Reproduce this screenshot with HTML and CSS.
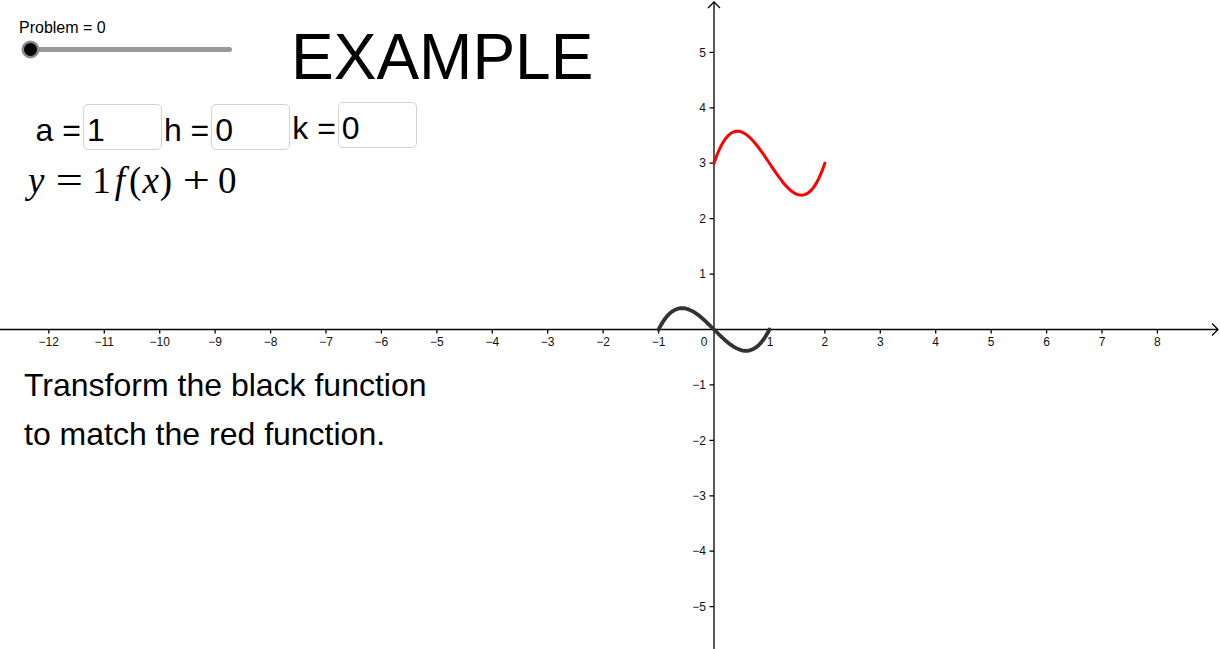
FILE: index.html
```html
<!DOCTYPE html>
<html lang="en">
<head>
<meta charset="utf-8">
<title>Transform the function</title>
<link rel="stylesheet" href="styles.css">
</head>
<body>
<div class="app">
  <svg class="graph" width="1220" height="649" viewBox="0 0 1220 649" xmlns="http://www.w3.org/2000/svg">
    <g class="axes" stroke="#000" stroke-width="1.3" fill="none">
      <line x1="0" y1="329.5" x2="1218" y2="329.5"/>
      <polyline points="1212,323.5 1218,329.5 1212,335.5"/>
      <line x1="714" y1="2" x2="714" y2="649"/>
      <polyline points="708,8 714,2 720,8"/>
      <path d="M48.8 329.5v4M104.3 329.5v4M159.7 329.5v4M215.1 329.5v4M270.6 329.5v4M326 329.5v4M381.4 329.5v4M436.9 329.5v4M492.3 329.5v4M547.7 329.5v4M603.1 329.5v4M658.6 329.5v4M769.4 329.5v4M824.9 329.5v4M880.3 329.5v4M935.7 329.5v4M991.2 329.5v4M1046.6 329.5v4M1102 329.5v4M1157.4 329.5v4"/>
      <path d="M714 52.4h-4.5M714 107.8h-4.5M714 163.2h-4.5M714 218.6h-4.5M714 274.1h-4.5M714 384.9h-4.5M714 440.4h-4.5M714 495.8h-4.5M714 551.2h-4.5M714 606.7h-4.5"/>
    </g>
    <g class="xlabels" text-anchor="middle">
      <text x="48.8" y="346">−12</text>
      <text x="104.3" y="346">−11</text>
      <text x="159.7" y="346">−10</text>
      <text x="215.1" y="346">−9</text>
      <text x="270.6" y="346">−8</text>
      <text x="326" y="346">−7</text>
      <text x="381.4" y="346">−6</text>
      <text x="436.9" y="346">−5</text>
      <text x="492.3" y="346">−4</text>
      <text x="547.7" y="346">−3</text>
      <text x="603.1" y="346">−2</text>
      <text x="658.6" y="346">−1</text>
      <text x="704" y="346">0</text>
      <text x="770" y="346">1</text>
      <text x="824.9" y="346">2</text>
      <text x="880.3" y="346">3</text>
      <text x="935.7" y="346">4</text>
      <text x="991.2" y="346">5</text>
      <text x="1046.6" y="346">6</text>
      <text x="1102" y="346">7</text>
      <text x="1157.4" y="346">8</text>
    </g>
    <g class="ylabels" text-anchor="end">
      <text x="706" y="56.5">5</text>
      <text x="706" y="112">4</text>
      <text x="706" y="167.4">3</text>
      <text x="706" y="222.8">2</text>
      <text x="706" y="278.3">1</text>
      <text x="706" y="389.1">−1</text>
      <text x="706" y="444.6">−2</text>
      <text x="706" y="500">−3</text>
      <text x="706" y="555.4">−4</text>
      <text x="706" y="610.9">−5</text>
    </g>
    <g transform="translate(714 329.5) scale(55.43 -55.43)" fill="none" stroke-linecap="round" stroke-linejoin="round">
      <polyline class="curve-black" vector-effect="non-scaling-stroke" points="-1,0 -0.95,0.0926 -0.9,0.171 -0.85,0.2359 -0.8,0.288 -0.75,0.3281 -0.7,0.357 -0.65,0.3754 -0.6,0.384 -0.55,0.3836 -0.5,0.375 -0.45,0.3589 -0.4,0.336 -0.35,0.3071 -0.3,0.273 -0.25,0.2344 -0.2,0.192 -0.15,0.1466 -0.1,0.099 -0.05,0.0499 0,0 0.05,-0.0499 0.1,-0.099 0.15,-0.1466 0.2,-0.192 0.25,-0.2344 0.3,-0.273 0.35,-0.3071 0.4,-0.336 0.45,-0.3589 0.5,-0.375 0.55,-0.3836 0.6,-0.384 0.65,-0.3754 0.7,-0.357 0.75,-0.3281 0.8,-0.288 0.85,-0.2359 0.9,-0.171 0.95,-0.0926 1,0"/>
      <polyline class="curve-red" vector-effect="non-scaling-stroke" points="0,3 0.05,3.1389 0.1,3.2565 0.15,3.3538 0.2,3.432 0.25,3.4922 0.3,3.5355 0.35,3.563 0.4,3.576 0.45,3.5755 0.5,3.5625 0.55,3.5383 0.6,3.504 0.65,3.4607 0.7,3.4095 0.75,3.3516 0.8,3.288 0.85,3.2199 0.9,3.1485 0.95,3.0748 1,3 1.05,2.9252 1.1,2.8515 1.15,2.7801 1.2,2.712 1.25,2.6484 1.3,2.5905 1.35,2.5393 1.4,2.496 1.45,2.4617 1.5,2.4375 1.55,2.4245 1.6,2.424 1.65,2.437 1.7,2.4645 1.75,2.5078 1.8,2.568 1.85,2.6462 1.9,2.7435 1.95,2.8611 2,3"/>
    </g>
  </svg>

  <div class="panel">
    <div class="top-row">
      <div class="slider-block">
        <div class="slider-label">Problem = 0</div>
        <div class="slider-track"><span class="slider-knob"></span></div>
      </div>
      <h1 class="title">EXAMPLE</h1>
    </div>

    <div class="inputs-row">
      <div class="field"><span class="lbl">a =</span><span class="box">1</span></div>
      <div class="field"><span class="lbl">h =</span><span class="box">0</span></div>
      <div class="field field-k"><span class="lbl">k =</span><span class="box">0</span></div>
    </div>

    <div class="formula"><i>y</i><span class="op op-eq">=</span><span class="num">1</span><i class="fn">f</i><span class="paren">(</span><i>x</i><span class="paren">)</span><span class="op op-plus">+</span><span class="num">0</span></div>

    <p class="prompt">Transform the black function<br>to match the red function.</p>
  </div>
</div>
</body>
</html>
```
FILE: styles.css
```css
html, body {
  margin: 0;
  padding: 0;
  background: #fff;
}

body {
  font-family: "Liberation Sans", Arial, sans-serif;
  color: #000;
}

.app {
  position: relative;
  width: 1220px;
  height: 649px;
  overflow: hidden;
}

.graph {
  position: absolute;
  left: 0;
  top: 0;
}

.xlabels text,
.ylabels text {
  font-family: "Liberation Sans", Arial, sans-serif;
  font-size: 12px;
  fill: #111;
}

.curve-black {
  stroke: #333;
  stroke-width: 3.8;
}

.curve-red {
  stroke: #ff0000;
  stroke-width: 3;
}

.panel {
  position: relative;
  padding-left: 19px;
}

.top-row {
  display: flex;
  align-items: flex-start;
}

.slider-block {
  width: 272px;
  padding-top: 19px;
}

.slider-label {
  font-size: 16px;
  line-height: 18px;
}

.slider-track {
  position: relative;
  margin-top: 9.5px;
  margin-left: 11px;
  width: 202px;
  height: 5px;
  border-radius: 3px;
  background: #999;
}

.slider-knob {
  position: absolute;
  left: -6.5px;
  top: -4px;
  width: 13px;
  height: 13px;
  border-radius: 50%;
  background: #000;
  box-shadow: 0 0 0 2.5px #8a8a8a;
}

.title {
  margin: 25px 0 0 0;
  font-size: 64px;
  line-height: 64px;
  font-weight: normal;
}

.inputs-row {
  display: flex;
  align-items: flex-start;
  margin-top: 15px;
  margin-left: 16.5px;
  gap: 2px;
}

.field {
  display: flex;
  align-items: flex-start;
  gap: 2px;
}

.field-k {
  margin-top: -2px;
}

.lbl,
.box {
  font-size: 32px;
  line-height: 33px;
}

.lbl {
  padding-top: 10px;
}

.box {
  box-sizing: border-box;
  width: 79px;
  height: 46px;
  padding: 9px 0 0 3px;
  border: 1px solid #d3d3d3;
  border-radius: 5px;
  background: #fff;
}

.formula {
  margin-top: 11px;
  margin-left: 9px;
  font-family: "Liberation Serif", "Times New Roman", serif;
  font-size: 37px;
  line-height: 40px;
  white-space: nowrap;
}

.formula .op {
  display: inline-block;
  transform: scaleX(1.3);
}

.op-eq {
  margin: 0 12px 0 15px;
}

.op-plus {
  margin: 0 11px 0 13px;
}

.formula .fn {
  margin: 0 3px 0 4px;
}

.formula .paren {
  margin: 0 1px;
}

.prompt {
  margin: 160px 0 0 5px;
  font-size: 32px;
  line-height: 49px;
}
```
